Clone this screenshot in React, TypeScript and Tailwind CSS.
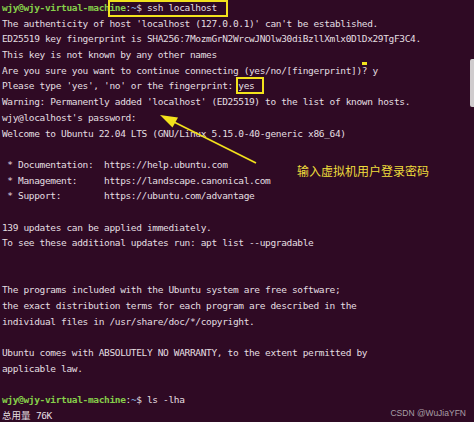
const mono = "font-['DejaVu_Sans_Mono','Noto_Sans_CJK_SC',monospace]";

function Prompt({ cmd }: { cmd: string }) {
  return (
    <div>
      <span className="font-bold text-[#86cf4a]">wjy@wjy-virtual-machine</span>
      <span>:</span>
      <span className="font-bold text-[#7aa0d4]">~</span>
      <span>$ {cmd}</span>
    </div>
  );
}

const Line = ({ children }: { children?: React.ReactNode }) => <div>{children ?? ' '}</div>;

export default function App() {
  return (
    <div className="relative w-[474px] h-[422px] overflow-hidden bg-[#2f0a24]">
      <div
        className={`${mono} text-[9.5px] leading-[15.68px] tracking-[-0.35px] text-[#e4dfe1] whitespace-pre pl-[2px]`}
      >
        <Prompt cmd="ssh localhost" />
        <Line>The authenticity of host 'localhost (127.0.0.1)' can't be established.</Line>
        <Line>ED25519 key fingerprint is SHA256:7MozmGrN2WrcwJNOlw30diBzllXmlx0DlDx29TgF3C4.</Line>
        <Line>This key is not known by any other names</Line>
        <Line>Are you sure you want to continue connecting (yes/no/[fingerprint])? y</Line>
        <Line>Please type 'yes', 'no' or the fingerprint: yes</Line>
        <Line>Warning: Permanently added 'localhost' (ED25519) to the list of known hosts.</Line>
        <Line>wjy@localhost's password: </Line>
        <Line>Welcome to Ubuntu 22.04 LTS (GNU/Linux 5.15.0-40-generic x86_64)</Line>
        <Line />
        <Line> * Documentation:  https://help.ubuntu.com</Line>
        <Line> * Management:     https://landscape.canonical.com</Line>
        <Line> * Support:        https://ubuntu.com/advantage</Line>
        <Line />
        <Line>139 updates can be applied immediately.</Line>
        <Line>To see these additional updates run: apt list --upgradable</Line>
        <Line />
        <Line />
        <Line>The programs included with the Ubuntu system are free software;</Line>
        <Line>the exact distribution terms for each program are described in the</Line>
        <Line>individual files in /usr/share/doc/*/copyright.</Line>
        <Line />
        <Line>Ubuntu comes with ABSOLUTELY NO WARRANTY, to the extent permitted by</Line>
        <Line>applicable law.</Line>
        <Line />
        <Prompt cmd="ls -lha" />
        <Line>
          <span className="tracking-normal">总用量</span> 76K
        </Line>
      </div>

      {/* annotations */}
      <div className="absolute left-[108px] top-0 w-[120px] h-[17px] border-2 border-[#f2e21c]" />
      <div className="absolute left-[236px] top-[77px] w-[28px] h-[17px] border-2 border-[#f2e21c]" />
      <div className="absolute left-[362px] top-[62px] w-[5px] h-[3px] bg-[#f2e21c]" />
      <svg className="absolute left-0 top-0" width="474" height="422">
        <line x1="256" y1="163" x2="172" y2="121" stroke="#f2e21c" strokeWidth="1.6" />
        <polygon points="160,115 178,117.5 172.5,127.5" fill="#f2e21c" />
      </svg>
      <div className="absolute left-[297px] top-[162px] font-['Noto_Sans_CJK_SC',sans-serif] text-[12px] leading-[18px] text-[#eedd3c] whitespace-nowrap">
        输入虚拟机用户登录密码
      </div>

      {/* scrollbar */}
      <div className="absolute right-0 top-[59px] w-[4px] h-[48px] rounded-l-[2px] bg-[#cfcbcd]" />

      {/* watermark */}
      <div className="absolute right-[8px] top-[406px] font-['Liberation_Sans',sans-serif] text-[8.5px] leading-[14px] text-[#a89ea6] whitespace-nowrap">
        CSDN @WuJiaYFN
      </div>
    </div>
  );
}
